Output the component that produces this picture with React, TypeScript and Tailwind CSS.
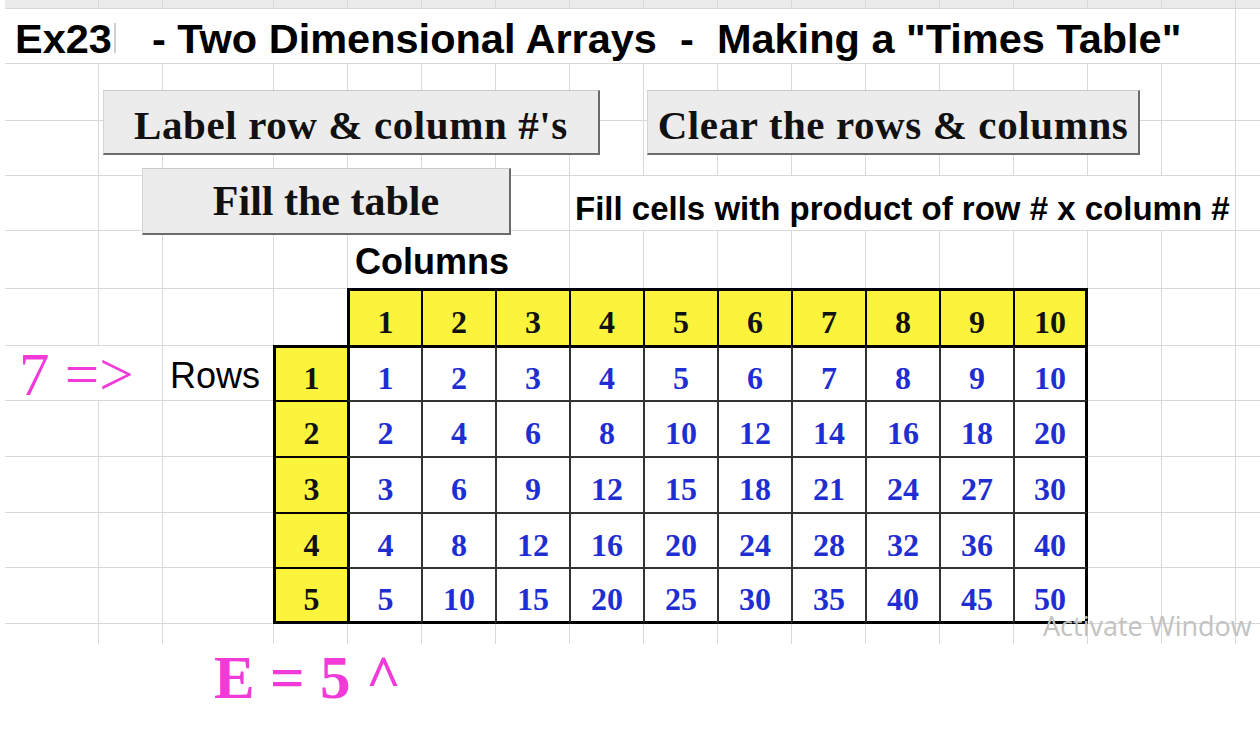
import React from 'react';

const LETTERS = 'ABCDEFGHIJKLMNOPQ'.split('');

function blanks(n: number, prefix: string) {
  return Array.from({ length: n }, (_, i) => <div key={`${prefix}-${i}`} className="bg-white" />);
}

function SheetButton({ className, children }: { className: string; children: React.ReactNode }) {
  return (
    <button
      type="button"
      className={`absolute flex items-center justify-center border-l border-t border-b-2 border-r-2 border-l-[#d4d4d4] border-t-[#cbcbcb] border-b-[#6b6b6b] border-r-[#6b6b6b] bg-[#ececec] font-['Liberation_Serif',serif] font-bold leading-none text-[#111] ${className}`}
    >
      {children}
    </button>
  );
}

function TimesTable() {
  const cells: React.ReactNode[] = [];
  for (let r = 0; r <= 5; r++) {
    for (let c = 0; c <= 10; c++) {
      let cls = '';
      let text: string | number = '';
      if (r === 0 && c === 0) {
        cls = 'border-l border-t border-[#d9d9d9] bg-white';
      } else if (r === 0) {
        cls = `bg-[#fcf43c] text-[#111] border-t-[3px] border-black ${c === 1 ? 'border-l-[3px]' : 'border-l-2'} ${c === 10 ? 'border-r-[3px]' : ''}`;
        text = c;
      } else if (c === 0) {
        cls = `bg-[#fcf43c] text-[#111] border-l-[3px] border-black ${r === 1 ? 'border-t-[3px]' : 'border-t-2'} ${r === 5 ? 'border-b-[3px]' : ''}`;
        text = r;
      } else {
        cls = `bg-white text-[#1f2ed2] ${c === 1 ? 'border-l-[3px] border-l-black' : 'border-l-2 border-l-[#333]'} ${r === 1 ? 'border-t-[3px] border-t-black' : 'border-t-2 border-t-[#333]'} ${c === 10 ? 'border-r-[3px] border-r-black' : ''} ${r === 5 ? 'border-b-[3px] border-b-black' : ''}`;
        text = r * c;
      }
      cells.push(
        <div key={`${r}-${c}`} className={`flex items-center justify-center pt-2 ${cls}`}>
          {text}
        </div>
      );
    }
  }
  return (
    <div className="col-span-11 row-span-6 -m-px grid grid-cols-[74px_repeat(9,74px)_75px] grid-rows-[57px_55px_56px_56px_55px_57px] bg-white font-['Liberation_Serif',serif] text-[32px] font-bold leading-none">
      {cells}
    </div>
  );
}

export default function App() {
  return (
    <div className="relative h-[736px] w-[1260px] overflow-hidden bg-white">
      <div className="pl-[5px]">
        <div className="grid w-max grid-cols-[93px_63px_110px_repeat(14,73px)] grid-rows-[8px_54px_56px_54px_54px_57px_56px_54px_55px_55px_54px_55px_20px] gap-px bg-[#d9d9d9] font-['Liberation_Sans',Arial,sans-serif] text-black">
          {/* column header strip, cut off by the screenshot */}
          {LETTERS.map((l) => (
            <div key={`h-${l}`} className="bg-[#ebebeb]" />
          ))}

          {/* row 1: title */}
          <div className="col-span-16 flex items-end bg-white pb-[4px] pl-[10px] text-[41.5px] font-bold leading-none">
            <span>Ex23</span>
            <span className="mb-[6px] ml-[2px] h-[30px] w-[2px] bg-[#cfcfcf]" />
            <span className="ml-[36px] whitespace-pre">- Two Dimensional Arrays  -  Making a "Times Table"</span>
          </div>
          {blanks(1, 'r1')}

          {/* rows 2 and 3 (buttons float over them) */}
          {blanks(17, 'r2')}
          {blanks(17, 'r3')}

          {/* row 4 */}
          {blanks(7, 'r4a')}
          <div className="col-span-9 flex items-end bg-white pb-[5px] pl-[5px] text-[33px] font-bold leading-none">
            Fill cells with product of row # x column #
          </div>
          {blanks(1, 'r4b')}

          {/* row 5 */}
          {blanks(4, 'r5a')}
          <div className="col-span-3 flex items-end bg-white pb-[8px] pl-[7px] text-[36px] font-bold leading-none">Columns</div>
          {blanks(10, 'r5b')}

          {/* rows 6 - 11 with the table */}
          {blanks(3, 'r6a')}
          <TimesTable />
          {blanks(3, 'r6b')}

          <div className="col-span-2 flex items-end bg-white pl-[14px] font-['Liberation_Serif',serif] text-[61px] leading-[50px] text-[#f23ad9]">
            7 =&gt;
          </div>
          <div className="flex items-end bg-white pb-[6px] pl-[7px] text-[36px] leading-none">Rows</div>
          {blanks(3, 'r7')}

          {blanks(6, 'r8')}
          {blanks(6, 'r9')}
          {blanks(6, 'r10')}
          {blanks(6, 'r11')}
          {blanks(17, 'r12')}
        </div>
      </div>

      <div className="mt-[3px] pl-[214px] font-['Liberation_Serif',serif] text-[61px] font-bold leading-none whitespace-pre text-[#f23ad9]">
        E = 5 ^
      </div>

      <SheetButton className="left-[103px] top-[90px] h-[65px] w-[497px] pt-[6px] text-[41px] tracking-[0.6px]">
        Label row &amp; column #'s
      </SheetButton>
      <SheetButton className="left-[647px] top-[90px] h-[65px] w-[493px] pt-[6px] text-[41px] tracking-[0.6px]">
        Clear the rows &amp; columns
      </SheetButton>
      <SheetButton className="left-[142px] top-[168px] h-[67px] w-[369px] text-[42px]">Fill the table</SheetButton>

      <div className="absolute left-[1043px] top-[616px] z-10 whitespace-nowrap font-['Open_Sans',sans-serif] text-[27px] leading-[20px] text-[#c2c2c2]">
        Activate Window
      </div>
    </div>
  );
}
